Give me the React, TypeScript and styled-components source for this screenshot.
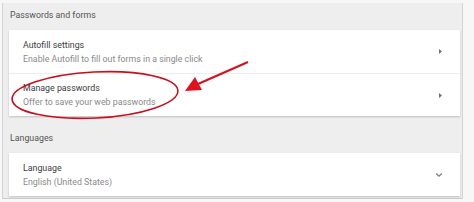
import React from "react";
import styled, { createGlobalStyle } from "styled-components";

const GlobalStyle = createGlobalStyle`
  html, body {
    margin: 0;
    padding: 0;
    background: #f7f7f7;
    font-family: Roboto, "Liberation Sans", Arial, sans-serif;
  }
`;

type Item = { title: string; sub: string; icon: "right" | "down" };

const sections: { heading: string; items: Item[] }[] = [
  {
    heading: "Passwords and forms",
    items: [
      { title: "Autofill settings", sub: "Enable Autofill to fill out forms in a single click", icon: "right" },
      { title: "Manage passwords", sub: "Offer to save your web passwords", icon: "right" },
    ],
  },
  {
    heading: "Languages",
    items: [{ title: "Language", sub: "English (United States)", icon: "down" }],
  },
];

const App: React.FC = () => {
  return (
    <Page>
      <GlobalStyle />
      <Frame>
        {sections.map((s) => (
          <Section key={s.heading}>
            <Heading>{s.heading}</Heading>
            <Card>
              {s.items.map((it) => (
                <Row key={it.title}>
                  <Texts>
                    <Title>{it.title}</Title>
                    <Sub>{it.sub}</Sub>
                  </Texts>
                  {it.icon === "right" ? (
                    <svg width="5" height="7" viewBox="0 0 5 7">
                      <path d="M1 1 L4 3.5 L1 6 Z" fill="#707070" />
                    </svg>
                  ) : (
                    <svg width="8" height="6" viewBox="0 0 8 6">
                      <path d="M1.2 1.5 L4 4.2 L6.8 1.5" fill="none" stroke="#7a7a7a" strokeWidth="1.2" />
                    </svg>
                  )}
                </Row>
              ))}
            </Card>
          </Section>
        ))}
      </Frame>
      <Annotation width="474" height="202" viewBox="0 0 474 202">
        <ellipse
          cx="95"
          cy="95"
          rx="83"
          ry="23"
          fill="none"
          stroke="#c8101c"
          strokeWidth="1.6"
          transform="rotate(-3 95 95)"
        />
        <line x1="248" y1="62" x2="198" y2="84" stroke="#d8101c" strokeWidth="2" />
        <path d="M185 91 L195 77 L202 90 Z" fill="#e0101c" />
      </Annotation>
    </Page>
  );
};

const Page = styled.div`
  position: relative;
  width: 474px;
  height: 202px;
  overflow: hidden;
  padding-top: 3px;
  box-sizing: border-box;
`;

const Frame = styled.div`
  margin-left: 2px;
  width: 461px;
  height: 196px;
  box-sizing: border-box;
  background: #eeeeee;
  border-left: 1px solid #d4d4d4;
  border-right: 1px solid #d4d4d4;
  border-bottom: 1px solid #cbcbcb;
  padding: 5px 2px 0 6px;
  overflow: hidden;
`;

const Section = styled.div`
  & + & {
    margin-top: 15px;
  }
`;

const Heading = styled.div`
  font-size: 8.8px;
  line-height: 14px;
  color: #555;
  padding-left: 1px;
  margin-bottom: 8px;
`;

const Card = styled.div`
  background: #fff;
  box-shadow: 0 1px 2px rgba(0, 0, 0, 0.2);
`;

const Row = styled.div`
  display: flex;
  align-items: center;
  justify-content: space-between;
  height: 43px;
  box-sizing: border-box;
  padding: 0 17px 0 14px;
  & + & {
    border-top: 1px solid #ededed;
  }
`;

const Texts = styled.div`
  display: flex;
  flex-direction: column;
`;

const Title = styled.div`
  font-size: 8.8px;
  line-height: 14px;
  color: #3c3c3c;
`;

const Sub = styled.div`
  font-size: 8.8px;
  line-height: 14px;
  color: #8a8a8a;
`;

const Annotation = styled.svg`
  position: absolute;
  left: 0;
  top: 0;
  pointer-events: none;
`;

export default App;
